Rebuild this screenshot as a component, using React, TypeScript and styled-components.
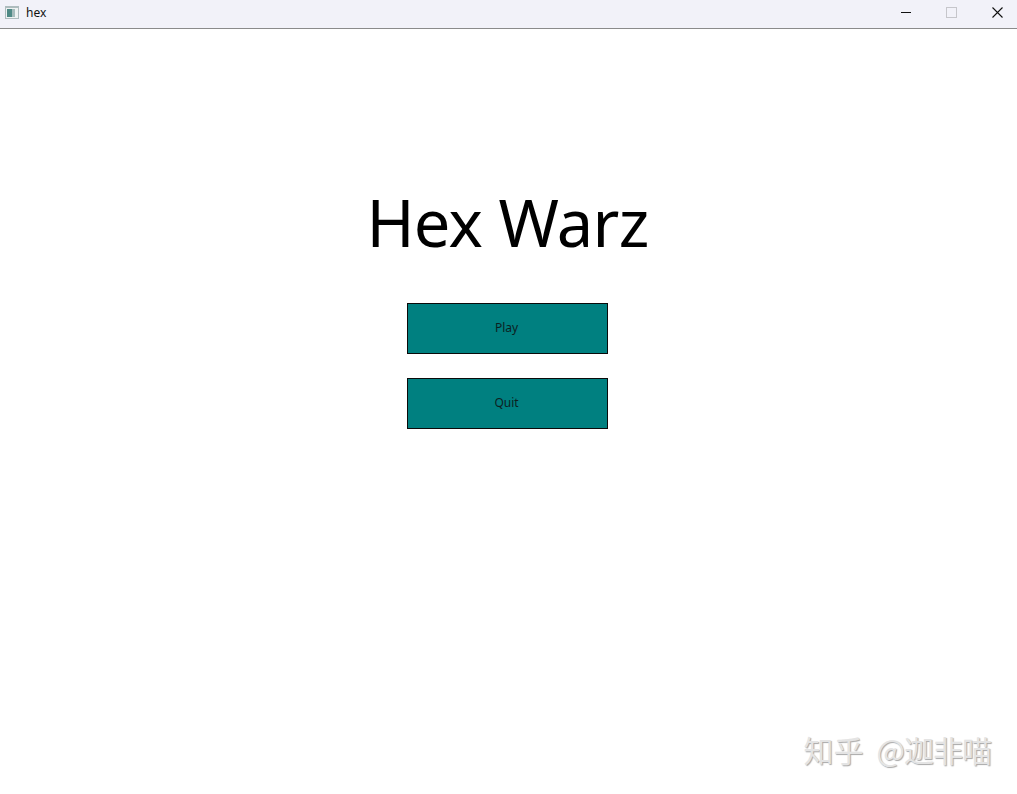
import React, { FC } from "react";
import styled, { createGlobalStyle } from "styled-components";

const GlobalStyle = createGlobalStyle`
  html, body {
    margin: 0;
    padding: 0;
    background: #ffffff;
  }
`;

const Window = styled.div`
  position: relative;
  width: 1017px;
  height: 794px;
  overflow: hidden;
  background: #ffffff;
  font-family: "Noto Sans", "Liberation Sans", sans-serif;
`;

const TitleBar = styled.header`
  box-sizing: border-box;
  display: flex;
  align-items: center;
  justify-content: space-between;
  height: 29px;
  padding-bottom: 4px;
  background: #f2f2f9;
  border-bottom: 1px solid #8b8b8b;
`;

const TitleGroup = styled.div`
  display: flex;
  align-items: center;
  gap: 7px;
  padding-left: 5px;
`;

const WindowName = styled.span`
  padding-top: 2px;
  font-size: 12px;
  line-height: 16px;
  color: #111111;
`;

const Controls = styled.div`
  display: flex;
  align-items: center;
  padding-right: 14px;
  gap: 35px;
`;

const Menu = styled.main`
  display: flex;
  flex-direction: column;
  align-items: center;
  padding: 150px 2px 0 0;
`;

const Heading = styled.h1`
  margin: 0 0 37px;
  height: 87px;
  line-height: 87px;
  font-size: 65px;
  font-weight: 400;
  letter-spacing: -0.7px;
  color: #000000;
`;

const MenuButton = styled.button`
  box-sizing: border-box;
  width: 201px;
  height: 51px;
  margin-bottom: 24px;
  padding: 0 2px 2px 0;
  background: #008080;
  border: 1px solid #0a0a0a;
  border-radius: 0;
  font-family: inherit;
  font-size: 12px;
  color: #0c1f1f;
`;

const Watermark = styled.div`
  position: absolute;
  right: 26px;
  top: 729px;
  display: flex;
  align-items: center;
  gap: 13px;
  font-family: "Noto Sans CJK SC", sans-serif;
  font-size: 30px;
  line-height: 40px;
  color: #e4e4e4;
  text-shadow: 1px 1px 1px #a8a8a8;
`;

const Handle = styled.span`
  letter-spacing: -1px;
`;

const AppIcon: FC = () => (
  <svg width="14" height="13" viewBox="0 0 14 13">
    <rect width="14" height="13" fill="#aebcbe" />
    <rect x="1" y="2" width="12" height="10" fill="#eef2f2" />
    <rect x="2" y="3" width="5" height="8" fill="#4f8a86" />
    <rect x="7" y="3" width="3" height="8" fill="#a6bcbc" />
  </svg>
);

const MinimizeIcon: FC = () => (
  <svg width="10" height="11" viewBox="0 0 10 11">
    <path d="M0 5.5H10" stroke="#111111" strokeWidth="1" />
  </svg>
);

const MaximizeIcon: FC = () => (
  <svg width="11" height="11" viewBox="0 0 11 11">
    <rect x="0.5" y="0.5" width="10" height="10" fill="none" stroke="#c6c6cb" />
  </svg>
);

const CloseIcon: FC = () => (
  <svg width="11" height="11" viewBox="0 0 11 11">
    <path d="M0.5 0.5L10.5 10.5M10.5 0.5L0.5 10.5" stroke="#111111" strokeWidth="1.1" />
  </svg>
);

const App: FC = () => (
  <Window>
    <GlobalStyle />
    <TitleBar>
      <TitleGroup>
        <AppIcon />
        <WindowName>hex</WindowName>
      </TitleGroup>
      <Controls>
        <MinimizeIcon />
        <MaximizeIcon />
        <CloseIcon />
      </Controls>
    </TitleBar>
    <Menu>
      <Heading>Hex Warz</Heading>
      <MenuButton>Play</MenuButton>
      <MenuButton>Quit</MenuButton>
    </Menu>
    <Watermark>
      <span>知乎</span>
      <Handle>@迦非喵</Handle>
    </Watermark>
  </Window>
);

export default App;
